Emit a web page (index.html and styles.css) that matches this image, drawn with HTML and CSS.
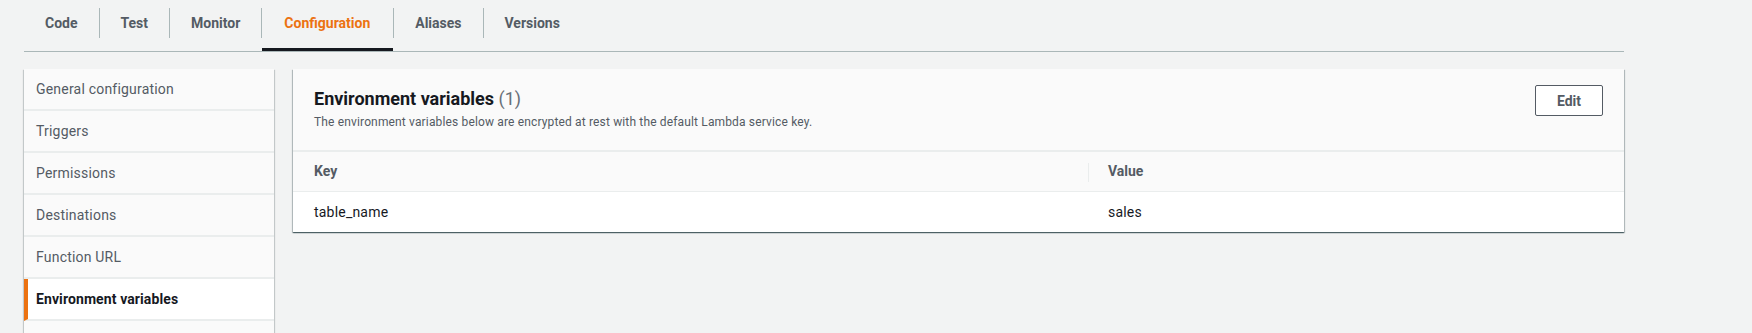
FILE: index.html
```html
<!DOCTYPE html>
<html lang="en">
<head>
<meta charset="utf-8">
<title>Configuration</title>
<link rel="stylesheet" href="styles.css">
</head>
<body>
<div class="page">
  <nav class="tabs">
    <div class="tab">Code</div>
    <span class="sep"></span>
    <div class="tab">Test</div>
    <span class="sep"></span>
    <div class="tab">Monitor</div>
    <span class="sep"></span>
    <div class="tab active">Configuration</div>
    <span class="sep"></span>
    <div class="tab">Aliases</div>
    <span class="sep"></span>
    <div class="tab">Versions</div>
  </nav>
  <div class="body">
    <ul class="side">
      <li class="item">General configuration</li>
      <li class="item">Triggers</li>
      <li class="item">Permissions</li>
      <li class="item">Destinations</li>
      <li class="item">Function URL</li>
      <li class="item active">Environment variables</li>
      <li class="item"></li>
    </ul>
    <section class="card">
      <header class="card-head">
        <div class="head-text">
          <h2 class="title">Environment variables <span class="count">(1)</span></h2>
          <p class="desc">The environment variables below are encrypted at rest with the default Lambda service key.</p>
        </div>
        <button class="btn">Edit</button>
      </header>
      <div class="table">
        <div class="th">Key</div>
        <div class="th th-value"><span class="colsep"></span>Value</div>
        <div class="td">table_name</div>
        <div class="td td-value">sales</div>
      </div>
    </section>
  </div>
</div>
</body>
</html>
```
FILE: styles.css
```css
html, body {
  margin: 0;
  padding: 0;
  background: #f2f3f3;
  font-family: Roboto, "Liberation Sans", Arial, sans-serif;
  color: #16191f;
  overflow: hidden;
}

.page {
  margin-left: 24px;
  width: 1600px;
}

.tabs {
  display: flex;
  align-items: flex-start;
  height: 51px;
  border-bottom: 1px solid #aab7b8;
}

.tab {
  height: 51px;
  line-height: 46px;
  padding: 0 21px;
  font-size: 14px;
  font-weight: 700;
  color: #545b64;
  box-sizing: border-box;
}

.tab.active {
  color: #ec7211;
  box-shadow: inset 0 -3px 0 #16191f;
  padding: 0 23px 0 22px;
}

.sep {
  width: 1px;
  height: 30px;
  margin-top: 8px;
  background: #aab7b8;
}

.body {
  display: flex;
  align-items: flex-start;
  gap: 19px;
  margin-top: 17px;
}

.side {
  list-style: none;
  margin: 0;
  padding: 0;
  width: 250px;
  flex: none;
  background: #fafafa;
  box-shadow: 0 1px 1px 0 rgba(0, 28, 36, 0.3), 1px 1px 1px 0 rgba(0, 28, 36, 0.15), -1px 1px 1px 0 rgba(0, 28, 36, 0.15);
}

.item {
  height: 40px;
  line-height: 40px;
  padding-left: 12px;
  font-size: 14px;
  letter-spacing: 0.2px;
  color: #545b64;
  border-bottom: 2px solid #eaeded;
}

.item.active {
  background: #ffffff;
  color: #16191f;
  font-weight: 700;
  letter-spacing: 0.1px;
  border-left: 4px solid #ec7211;
  padding-left: 8px;
}

.card {
  flex: 1;
  background: #ffffff;
  box-shadow: 0 1px 1px 0 rgba(0, 28, 36, 0.5), 1px 1px 1px 0 rgba(0, 28, 36, 0.2), -1px 1px 1px 0 rgba(0, 28, 36, 0.2);
}

.card-head {
  display: flex;
  justify-content: space-between;
  align-items: flex-start;
  padding: 19px 21px 20px 21px;
  background: #fafafa;
  border-bottom: 2px solid #eaeded;
}

.title {
  margin: 0 0 4px 0;
  font-size: 18px;
  line-height: 22px;
  font-weight: 700;
  color: #16191f;
}

.count {
  font-weight: 400;
  color: #687078;
}

.desc {
  margin: 0;
  font-size: 12px;
  line-height: 16px;
  letter-spacing: 0.15px;
  color: #545b64;
}

.btn {
  margin-top: -3px;
  width: 68px;
  height: 31px;
  background: #ffffff;
  border: 1px solid #545b64;
  border-radius: 2px;
  font-family: Roboto, "Liberation Sans", Arial, sans-serif;
  font-size: 14px;
  font-weight: 700;
  color: #545b64;
  padding: 0;
}

.table {
  display: grid;
  grid-template-columns: 795px 1fr;
}

.th {
  height: 39px;
  line-height: 39px;
  background: #fafafa;
  border-bottom: 1px solid #eaeded;
  font-size: 14px;
  font-weight: 700;
  color: #545b64;
  padding-left: 21px;
}

.th-value {
  position: relative;
  padding-left: 20px;
}

.colsep {
  position: absolute;
  left: 0;
  top: 11px;
  width: 1px;
  height: 19px;
  background: #eaeded;
}

.td {
  height: 40px;
  line-height: 40px;
  font-size: 14px;
  letter-spacing: 0.2px;
  color: #16191f;
  padding-left: 21px;
}

.td-value {
  padding-left: 20px;
}
```
